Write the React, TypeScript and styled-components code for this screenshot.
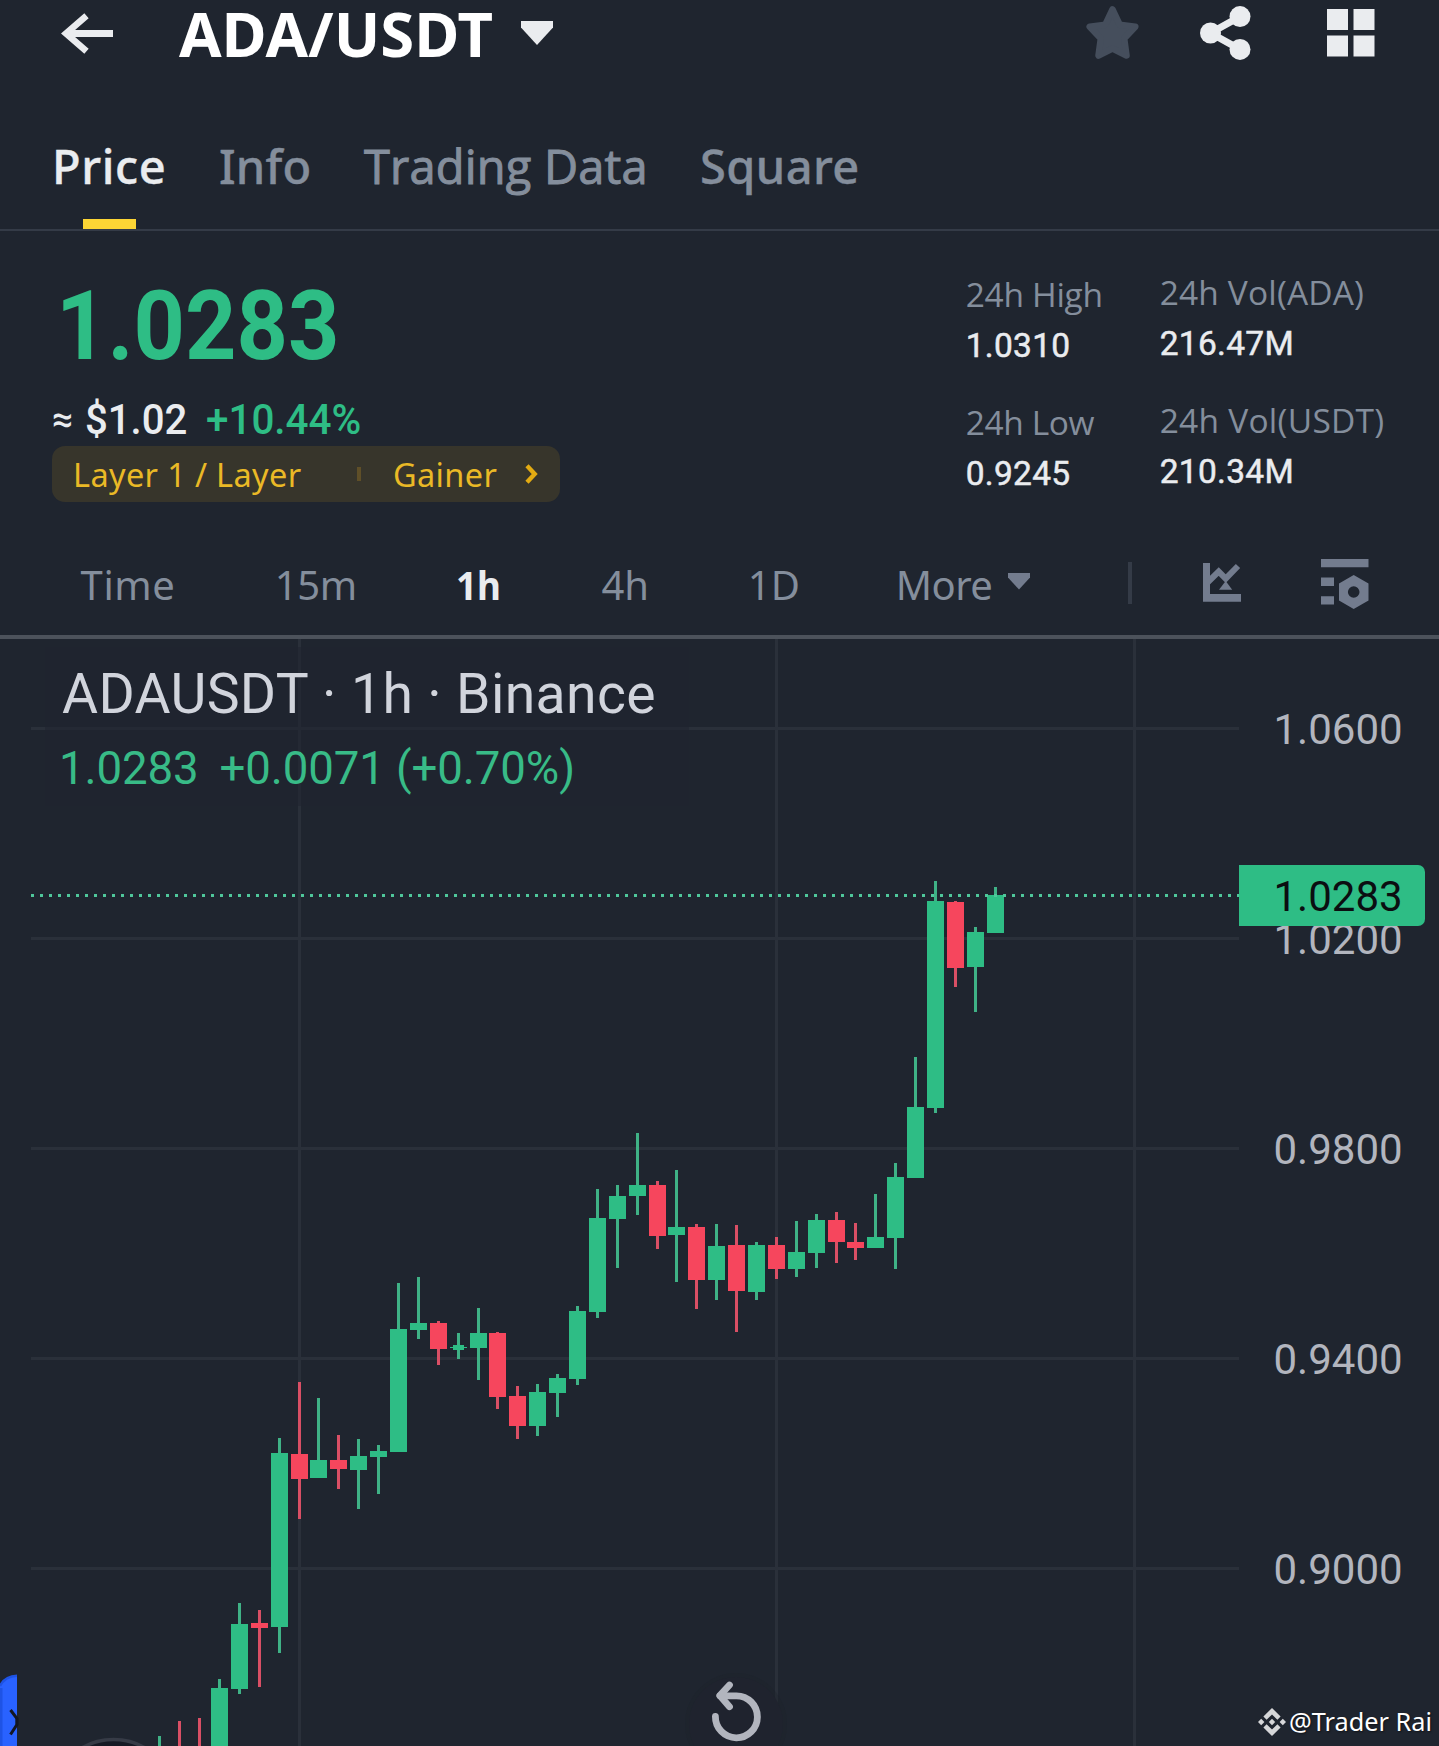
import React from "react";
import styled, { createGlobalStyle } from "styled-components";

const color = {
  bg: "#1f252f",
  text: "#eaecef",
  white: "#ffffff",
  muted: "#848e9c",
  dim: "#737c8e",
  line: "#343b47",
  green: "#2ebd85",
  red: "#f6465d",
  yellow: "#fcd535",
  amber: "#eab926",
};

const sans = `"Noto Sans", "Open Sans", sans-serif`;
const humanist = `"Open Sans", "Noto Sans", sans-serif`;
const numeric = `Roboto, "Liberation Sans", sans-serif`;

const GlobalStyle = createGlobalStyle`
  * { box-sizing: border-box; }
  body { margin: 0; background: ${color.bg}; overflow: hidden; }
`;

const Screen = styled.main`
  display: flex;
  flex-direction: column;
  width: 1439px;
  height: 1746px;
  overflow: hidden;
  background: ${color.bg};
  color: ${color.text};
  font-family: ${sans};
  white-space: pre;
`;

/* ---------- header ---------- */

const Header = styled.header`
  display: flex;
  align-items: center;
  justify-content: space-between;
  height: 66px;
  padding: 0 64px 0 61px;
`;

const PairPicker = styled.div`
  display: flex;
  align-items: center;
`;

const PairName = styled.h1`
  margin: 0 28px 0 66px;
  font-size: 61.6px;
  font-weight: 700;
  line-height: 66px;
  color: ${color.white};
`;

const Actions = styled.div`
  display: flex;
  align-items: center;
`;

const ShareSlot = styled.span`
  display: flex;
  margin: 0 76px 0 61px;
`;

/* ---------- tabs ---------- */

const Tabs = styled.nav`
  display: grid;
  grid-template-columns: 167px 145px 336px auto;
  justify-items: start;
  height: 165px;
  padding: 66.5px 0 0 52px;
  border-bottom: 2px solid ${color.line};
`;

const Tab = styled.div<{ $active?: boolean }>`
  display: flex;
  flex-direction: column;
  align-items: center;
  justify-content: space-between;
  color: ${(p) => (p.$active ? color.text : color.muted)};
`;

const TabLabel = styled.span<{ $spacing: number; $humanist?: boolean }>`
  font-family: ${(p) => (p.$humanist ? humanist : sans)};
  font-size: 47px;
  font-weight: 500;
  line-height: 67px;
  letter-spacing: ${(p) => p.$spacing}px;
  -webkit-text-stroke: ${(p) => (p.$humanist ? "1px currentColor" : "0.4px currentColor")};
`;

const TabMarker = styled.i`
  width: 53px;
  height: 10.5px;
  background: ${color.yellow};
`;

/* ---------- price summary ---------- */

const Summary = styled.section`
  display: flex;
  height: 289px;
`;

const Quote = styled.div`
  width: 965.7px;
  padding: 50px 0 0 52px;
`;

const LastPrice = styled.div`
  width: max-content;
  margin-left: 4px;
  font-family: ${numeric};
  font-size: 97px;
  font-weight: 700;
  line-height: 90px;
  color: ${color.green};
  transform: scaleX(0.925);
  transform-origin: left;
`;

const FiatRow = styled.div`
  display: flex;
  align-items: center;
  height: 50px;
  margin-top: 24px;
  font-family: ${numeric};
  font-size: 42px;
  font-weight: 500;
  line-height: 50px;
`;

const Approx = styled.span`
  width: 33px;
  font-size: 37px;
`;

const Fiat = styled.span`
  width: 120.5px;
  transform: scaleX(0.955);
  transform-origin: left;
`;

const Change = styled.span`
  color: ${color.green};
  transform: scaleX(0.962);
  transform-origin: left;
`;

const Tag = styled.div`
  display: flex;
  align-items: center;
  width: 508px;
  height: 56px;
  margin-top: 1px;
  padding-left: 21px;
  border-radius: 13px;
  background: #37352b;
  color: ${color.amber};
  font-size: 32.5px;
  letter-spacing: 0.35px;
`;

const TagDivider = styled.i`
  width: 4px;
  height: 14px;
  margin: 0 32px 0 55.5px;
  background: #5f4f28;
`;

const TagArrow = styled.span`
  display: flex;
  margin-left: 27.5px;
`;

const StatColumn = styled.dl<{ $top: number; $width: number }>`
  display: flex;
  flex-direction: column;
  gap: 24.5px;
  width: ${(p) => p.$width}px;
  margin: 0;
  padding-top: ${(p) => p.$top}px;
`;

const Stat = styled.div`
  font-size: 33.5px;
`;

const StatLabel = styled.dt<{ $spacing: number }>`
  font-family: ${humanist};
  line-height: 44px;
  letter-spacing: ${(p) => p.$spacing}px;
  color: ${color.muted};
`;

const StatValue = styled.dd`
  margin: 0;
  font-family: ${numeric};
  font-weight: 400;
  line-height: 60px;
  letter-spacing: 0.3px;
  -webkit-text-stroke: 0.5px currentColor;
`;

/* ---------- interval toolbar ---------- */

const Toolbar = styled.div`
  display: grid;
  grid-template-columns: 194.2px 181.2px 145.5px 146.3px 148.1px 232.6px 75px 118px auto;
  align-items: center;
  justify-items: start;
  height: 119px;
  padding: 13px 0 0 80.6px;
  border-bottom: 4px solid #4c525b;
`;

const Interval = styled.div<{ $active?: boolean; $spacing?: number }>`
  display: flex;
  align-items: center;
  padding-top: 2px;
  font-size: 40px;
  line-height: 54px;
  font-weight: ${(p) => (p.$active ? 700 : 400)};
  letter-spacing: ${(p) => p.$spacing ?? 0}px;
  color: ${(p) => (p.$active ? color.text : color.muted)};
  transform: ${(p) => (p.$active ? "scaleX(0.92)" : "none")};
  transform-origin: left;
`;

const CaretSlot = styled.span`
  display: flex;
  margin: 0 0 7px 16px;
`;

const ToolDivider = styled.i`
  width: 4px;
  height: 42px;
  margin-bottom: 3px;
  background: ${color.line};
`;

const ToolIcon = styled.span<{ $lift?: number }>`
  display: flex;
  margin-bottom: ${(p) => p.$lift ?? 0}px;
`;

/* ---------- chart ---------- */

const ChartArea = styled.section`
  position: relative;
  flex: 1;
`;

const Plot = styled.svg`
  display: block;
`;

const Legend = styled.div`
  position: absolute;
  left: 45px;
  top: 8px;
  width: 644px;
  height: 159px;
  padding-left: 17px;
  background: rgba(31, 37, 47, 0.55);
  font-family: ${numeric};
`;

const LegendTitle = styled.div`
  padding-top: 15px;
  font-size: 55.3px;
  line-height: 66px;
  letter-spacing: 0.35px;
  color: #d1d4dc;
`;

const LegendValues = styled.div`
  display: flex;
  gap: 21px;
  margin: 11px 0 0 -3px;
  font-size: 45.6px;
  line-height: 60px;
  letter-spacing: -0.1px;
  color: #38bb87;
`;

const Watermark = styled.div`
  position: absolute;
  right: 7px;
  bottom: 7px;
  display: flex;
  align-items: center;
  gap: 3px;
  font-size: 25.3px;
  line-height: 35px;
  color: ${color.white};
  text-shadow: 1px 1px 2px rgba(0, 0, 0, 0.5);
`;

/* center x, high, body top, body bottom, low, rising */
type Candle = [number, number, number, number, number, boolean];

const candles: Candle[] = [
  [159.5, 1736, 1760, 1760, 1760, true],
  [179.5, 1721, 1760, 1760, 1760, false],
  [199.5, 1718, 1760, 1760, 1760, false],
  [219.5, 1679, 1688, 1760, 1760, true],
  [239.5, 1603, 1624, 1689, 1694, true],
  [259.5, 1610, 1623, 1628, 1687, false],
  [279.5, 1438, 1453, 1627, 1653, true],
  [299.5, 1382, 1454, 1479, 1519, false],
  [318.5, 1398, 1460, 1478, 1478, true],
  [338.5, 1435, 1460, 1469, 1489, false],
  [358.5, 1439, 1456, 1470, 1509, true],
  [378.5, 1445, 1451, 1457, 1494, true],
  [398.5, 1283, 1329, 1452, 1452, true],
  [418.5, 1277, 1323, 1330, 1339, true],
  [438.5, 1321, 1323, 1349, 1365, false],
  [458.5, 1333, 1346, 1349, 1359, true],
  [478.5, 1308, 1333, 1348, 1380, true],
  [497.5, 1332, 1333, 1397, 1409, false],
  [517.5, 1386, 1396, 1426, 1439, false],
  [537.5, 1384, 1392, 1426, 1436, true],
  [557.5, 1374, 1378, 1393, 1417, true],
  [577.5, 1306, 1311, 1379, 1385, true],
  [597.5, 1189, 1218, 1312, 1318, true],
  [617.5, 1185, 1196, 1219, 1268, true],
  [637.5, 1133, 1185, 1196, 1215, true],
  [657.5, 1181, 1185, 1236, 1249, false],
  [676.5, 1170, 1227, 1235, 1282, true],
  [696.5, 1224, 1227, 1280, 1309, false],
  [716.5, 1224, 1246, 1280, 1300, true],
  [736.5, 1225, 1245, 1291, 1332, false],
  [756.5, 1242, 1245, 1292, 1300, true],
  [776.5, 1237, 1245, 1269, 1279, false],
  [796.5, 1221, 1252, 1269, 1277, true],
  [816.5, 1214, 1220, 1253, 1268, true],
  [836.5, 1212, 1220, 1242, 1263, false],
  [855.5, 1223, 1242, 1248, 1260, false],
  [875.5, 1194, 1237, 1248, 1248, true],
  [895.5, 1163, 1177, 1238, 1269, true],
  [915.5, 1057, 1107, 1178, 1178, true],
  [935.5, 881, 901, 1108, 1113, true],
  [955.5, 901, 902, 968, 987, false],
  [975.5, 927, 932, 967, 1012, true],
  [995.5, 887, 895, 933, 933, true],
];

const levels = [
  { y: 728.5, label: "1.0600" },
  { y: 938.5, label: "1.0200" },
  { y: 1148.5, label: "0.9800" },
  { y: 1358.5, label: "0.9400" },
  { y: 1568.5, label: "0.9000" },
];

const verticals = [299.5, 776.5, 1134.5];

function CandleMark({ data }: { data: Candle }) {
  const [x, high, top, bottom, low, up] = data;
  return (
    <g>
      <rect x={x - 1.5} y={high} width={3} height={low - high} fill={up ? "#3fb286" : "#d94f65"} />
      {x === 458.5 ? (
        <>
          <rect x={x - 8.5} y={1347} width={17} height={1} fill={color.green} />
          <rect x={x - 5.5} y={1345} width={11} height={5} fill={color.green} />
        </>
      ) : (
        <rect x={x - 8.5} y={top} width={17} height={bottom - top} fill={up ? color.green : color.red} />
      )}
    </g>
  );
}

function Chart() {
  return (
    <Plot width={1439} height={1107} viewBox="0 639 1439 1107">
      <g stroke="#2a303a" strokeWidth={3}>
        {levels.map((l) => (
          <line key={l.label} x1={31} x2={1239} y1={l.y} y2={l.y} />
        ))}
        {verticals.map((x) => (
          <line key={x} x1={x} x2={x} y1={639} y2={1746} />
        ))}
      </g>
      {candles.map((c) => (
        <CandleMark key={c[0]} data={c} />
      ))}
      <line x1={31} x2={1239} y1={895.5} y2={895.5} stroke="#4fc79b" strokeWidth={3} strokeDasharray="3 6" />
      <g fontFamily={numeric} fontSize={42} fill="#b2b5be">
        {levels.map((l) => (
          <text key={l.label} x={1273.5} y={l.y + 15.5}>
            {l.label}
          </text>
        ))}
        <path d="M1239 865H1418a7 7 0 0 1 7 7V919a7 7 0 0 1-7 7H1239Z" fill={color.green} />
        <text x={1273.5} y={911} fill="#0b0e11">
          1.0283
        </text>
      </g>

      <circle cx={113.5} cy={1802} r={62.5} fill="#151924" stroke="#363b46" strokeWidth={3.5} />

      <path d="M0 1746V1686Q5 1675.5 17 1675V1746Z" fill="#2962ff" />
      <path d="M0 1686Q5 1676 17 1675.7" fill="none" stroke="#1e53e5" strokeWidth={2.5} />
      <path d="M1 1746V1688" stroke="#1e53e5" strokeWidth={3} />
      <path d="M10.5 1710L17 1718.5V1724.5L10.5 1734.5" fill="none" stroke="#131722" strokeWidth={3} />
      <rect x={15.6} y={1717} width={1.4} height={10} fill="#131722" />

      <circle cx={736} cy={1724} r={51} fill="#1d212c" opacity={0.35} />
      <circle cx={736} cy={1724} r={47} fill="#1f232e" />
      <g fill="none" stroke="#b2b5be" strokeWidth={6.8} strokeLinecap="round" strokeLinejoin="round">
        <path d="M715.4 1716.5A21 21 0 1 0 736.4 1695.8H720" />
        <path d="M729.5 1685L719.8 1695.6L729.5 1706.7" />
      </g>
    </Plot>
  );
}

/* ---------- icons ---------- */

const BackIcon = () => (
  <svg width={52} height={41} viewBox="0 0 52 41">
    <path d="M25.5 2.7L5 20.5L25.5 38.3" fill="none" stroke={color.text} strokeWidth={6.6} />
    <path d="M5 17H52V24H5Z" fill={color.text} />
  </svg>
);

const Caret = ({ width, height, fill }: { width: number; height: number; fill: string }) => (
  <svg width={width} height={height} viewBox="0 0 32 24" preserveAspectRatio="none">
    <path d="M0 0H32V6.5L16 24L0 6.5Z" fill={fill} />
  </svg>
);

const StarIcon = () => (
  <svg width={53} height={54} viewBox="0 0 53 54">
    <path
      d="M26.5 3.5L33.7 18.7L49.3 20.7L38.2 32.5L40.5 49.5L26.5 42.6L12.5 49.5L14.8 32.5L3.7 20.7L19.3 18.7Z"
      fill="#454e5c"
      stroke="#454e5c"
      strokeWidth={6.5}
      strokeLinejoin="round"
    />
  </svg>
);

const ShareIcon = () => (
  <svg width={51} height={54} viewBox="0 0 51 54">
    <g fill={color.text}>
      <circle cx={10.5} cy={27} r={10.5} />
      <circle cx={40} cy={10.6} r={10.5} />
      <circle cx={40} cy={43.4} r={10.5} />
    </g>
    <path d="M40 10.6L10.5 27L40 43.4" fill="none" stroke={color.text} strokeWidth={7} />
  </svg>
);

const GridIcon = () => (
  <svg width={48} height={48} viewBox="0 0 48 48">
    <path d="M0 0H21V21H0ZM26.5 0H47.5V21H26.5ZM0 26.5H21V47.5H0ZM26.5 26.5H47.5V47.5H26.5Z" fill={color.text} />
  </svg>
);

const ChevronIcon = () => (
  <svg width={13} height={20} viewBox="0 0 13 20">
    <path d="M2 1.8L9.7 10L2 18.2" fill="none" stroke="#e3ab12" strokeWidth={4.4} />
  </svg>
);

const ChartIcon = () => (
  <svg width={38} height={39} viewBox="0 0 38 39">
    <path d="M0 0H7V31H38V38.7H0Z" fill={color.dim} />
    <path d="M4.5 19.5L15.7 8.6L22.7 15.7L35 3" fill="none" stroke={color.dim} strokeWidth={6} />
    <path d="M22.7 18L29.2 26.7H16Z" fill={color.dim} />
  </svg>
);

const SettingsIcon = () => (
  <svg width={48} height={50} viewBox="0 0 48 50">
    <path d="M0 0H47.5V8.3H0ZM0 18.4H13V27H0ZM0 37.2H13V45.6H0Z" fill={color.dim} />
    <path
      fillRule="evenodd"
      d="M32.7 16L47.5 24.5V41.5L32.7 50L18 41.5V24.5ZM32.7 27.2A5.8 5.8 0 1 0 32.7 38.8A5.8 5.8 0 1 0 32.7 27.2Z"
      fill={color.dim}
    />
  </svg>
);

const BinanceIcon = () => (
  <svg width={28} height={28} viewBox="0 0 28 28">
    <g fill="#d6d7d9">
      <path d="M14 0L22.6 8.6L19.4 11.8L14 6.4L8.6 11.8L5.4 8.6Z" />
      <path d="M14 28L22.6 19.4L19.4 16.2L14 21.6L8.6 16.2L5.4 19.4Z" />
      <path d="M14 10.8L17.2 14L14 17.2L10.8 14Z" />
      <path d="M3.2 10.8L6.4 14L3.2 17.2L0 14Z" />
      <path d="M24.8 10.8L28 14L24.8 17.2L21.6 14Z" />
    </g>
  </svg>
);

export default function App() {
  return (
    <Screen>
      <GlobalStyle />
      <Header>
        <PairPicker>
          <BackIcon />
          <PairName>ADA/USDT</PairName>
          <Caret width={32} height={24} fill={color.text} />
        </PairPicker>
        <Actions>
          <StarIcon />
          <ShareSlot>
            <ShareIcon />
          </ShareSlot>
          <GridIcon />
        </Actions>
      </Header>

      <Tabs>
        <Tab $active>
          <TabLabel $spacing={0.6}>Price</TabLabel>
          <TabMarker />
        </Tab>
        <Tab>
          <TabLabel $spacing={0.2}>Info</TabLabel>
        </Tab>
        <Tab>
          <TabLabel $spacing={0.2} $humanist>
            Trading Data
          </TabLabel>
        </Tab>
        <Tab>
          <TabLabel $spacing={0.4}>Square</TabLabel>
        </Tab>
      </Tabs>

      <Summary>
        <Quote>
          <LastPrice>1.0283</LastPrice>
          <FiatRow>
            <Approx>≈</Approx>
            <Fiat>$1.02</Fiat>
            <Change>+10.44%</Change>
          </FiatRow>
          <Tag>
            <span>Layer 1 / Layer</span>
            <TagDivider />
            <span>Gainer</span>
            <TagArrow>
              <ChevronIcon />
            </TagArrow>
          </Tag>
        </Quote>
        <StatColumn $top={40.7} $width={194}>
          <Stat>
            <StatLabel $spacing={-0.3}>24h High</StatLabel>
            <StatValue>1.0310</StatValue>
          </Stat>
          <Stat>
            <StatLabel $spacing={-0.4}>24h Low</StatLabel>
            <StatValue>0.9245</StatValue>
          </Stat>
        </StatColumn>
        <StatColumn $top={38.8} $width={240}>
          <Stat>
            <StatLabel $spacing={0.15}>24h Vol(ADA)</StatLabel>
            <StatValue>216.47M</StatValue>
          </Stat>
          <Stat>
            <StatLabel $spacing={0.25}>24h Vol(USDT)</StatLabel>
            <StatValue>210.34M</StatValue>
          </Stat>
        </StatColumn>
      </Summary>

      <Toolbar>
        <Interval $spacing={0.6}>Time</Interval>
        <Interval $spacing={-0.4}>15m</Interval>
        <Interval $active>1h</Interval>
        <Interval>4h</Interval>
        <Interval>1D</Interval>
        <Interval $spacing={-0.6}>
          More
          <CaretSlot>
            <Caret width={22} height={16.5} fill={color.dim} />
          </CaretSlot>
        </Interval>
        <ToolDivider />
        <ToolIcon $lift={3}>
          <ChartIcon />
        </ToolIcon>
        <ToolIcon>
          <SettingsIcon />
        </ToolIcon>
      </Toolbar>

      <ChartArea>
        <Chart />
        <Legend>
          <LegendTitle>ADAUSDT · 1h · Binance</LegendTitle>
          <LegendValues>
            <span>1.0283</span>
            <span>+0.0071 (+0.70%)</span>
          </LegendValues>
        </Legend>
        <Watermark>
          <BinanceIcon />
          <span>@Trader Rai</span>
        </Watermark>
      </ChartArea>
    </Screen>
  );
}
